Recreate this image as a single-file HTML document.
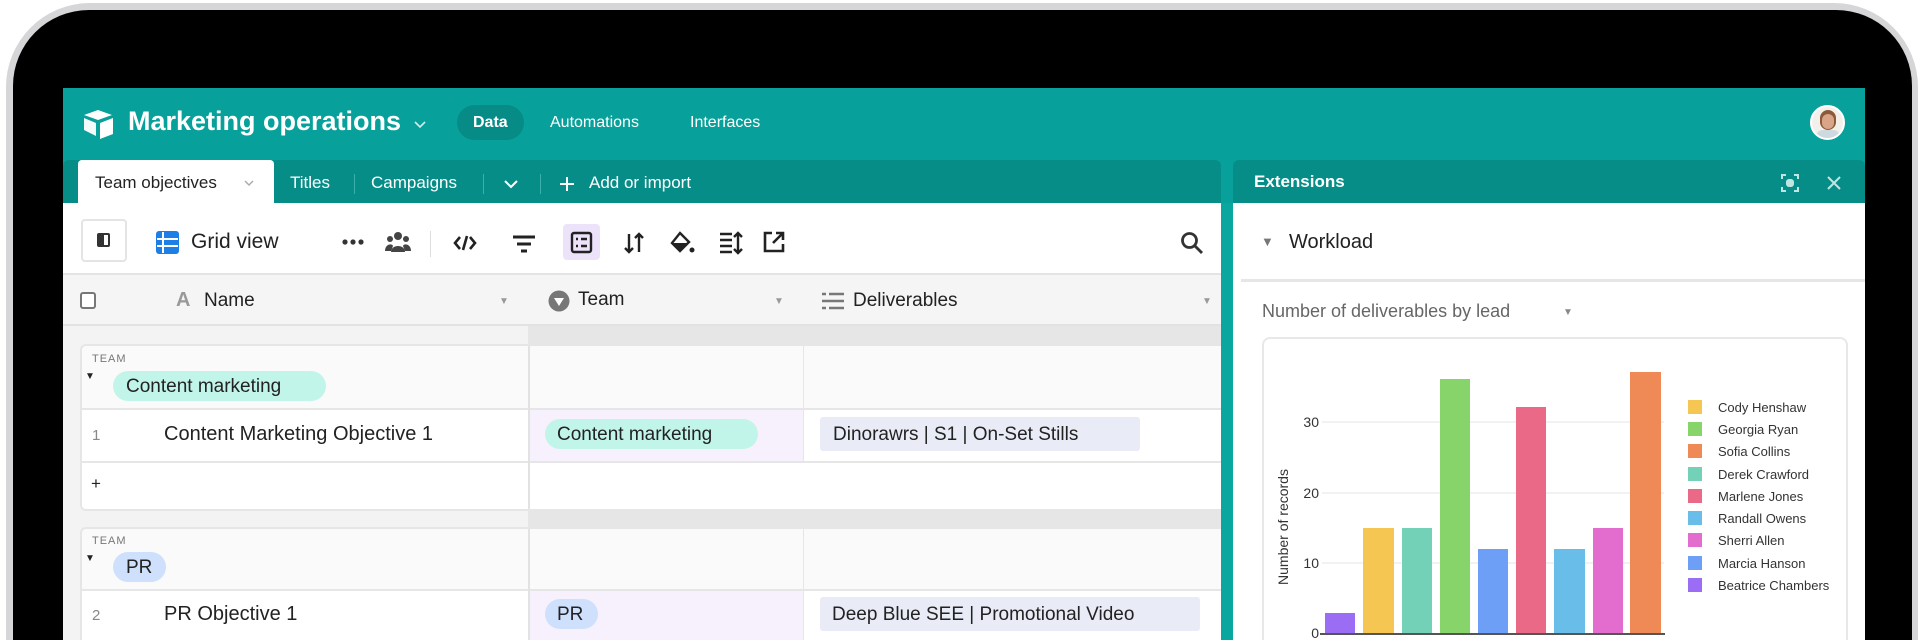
<!DOCTYPE html>
<html><head><meta charset="utf-8"><style>
*{margin:0;padding:0;box-sizing:border-box}
html,body{width:1920px;height:640px;overflow:hidden}
body{background:#fff;font-family:"Liberation Sans",sans-serif;position:relative}
.a{position:absolute}
.t{position:absolute;white-space:nowrap}
</style></head><body>
<div class="a" style="left:6px;top:3px;width:1912px;height:637px;border-radius:84px 84px 0 0;background:#d6d6d8"></div>
<div class="a" style="left:13px;top:10px;width:1899px;height:630px;border-radius:76px 76px 0 0;background:#000"></div>
<div class="a" style="left:63px;top:88px;width:1802px;height:552px;background:#07a09a;overflow:hidden">
  <svg class="a" style="left:20px;top:21px" width="32" height="30" viewBox="0 0 32 30"><path d="M15 1L29 6L15 11L1 6Z" fill="#fff"/><path d="M17 14L30 9V25L17 30Z" fill="#fff"/><path d="M1 9L13 14V27L1 21Z" fill="#fff" opacity=".95"/></svg>
  <div class="t" style="left:65px;top:18px;font-size:27px;color:#fff;font-weight:600">Marketing operations</div>
  <svg class="a" style="left:350px;top:32px" width="14" height="9"><path d="M2 2L7 7L12 2" stroke="#cfeeec" stroke-width="1.6" fill="none"/></svg>
  <div class="a" style="left:394px;top:17px;width:67px;height:35px;border-radius:18px;background:#068b86"></div>
  <div class="t" style="left:410px;top:26px;font-size:16px;color:#fff;font-weight:600">Data</div>
  <div class="t" style="left:487px;top:26px;font-size:16px;color:#fff">Automations</div>
  <div class="t" style="left:627px;top:26px;font-size:16px;color:#fff">Interfaces</div>
  <div class="a" style="left:1747px;top:17px;width:35px;height:35px;border-radius:50%;background:#f3f0ec;border:2px solid #fff;overflow:hidden">
    <div class="a" style="left:8px;top:3px;width:16px;height:20px;border-radius:8px;background:#8a5a3a"></div>
    <div class="a" style="left:10px;top:7px;width:12px;height:15px;border-radius:6px;background:#d9a487"></div>
    <div class="a" style="left:4px;top:23px;width:24px;height:14px;border-radius:8px;background:#cfd9e0"></div>
  </div>
  <div class="a" style="left:0;top:72px;width:1158px;height:44px;background:#078d88;border-radius:6px 6px 0 0"></div>
  <div class="a" style="left:15px;top:72px;width:196px;height:46px;background:#fff;border-radius:4px 4px 0 0"></div>
  <div class="t" style="left:32px;top:85px;font-size:17px;color:#222">Team objectives</div>
  <svg class="a" style="left:180px;top:91px" width="12" height="8"><path d="M2 2L6 6L10 2" stroke="#aaa" stroke-width="1.4" fill="none"/></svg>
  <div class="t" style="left:227px;top:85px;font-size:17px;color:#fff">Titles</div>
  <div class="a" style="left:291px;top:86px;width:1px;height:20px;background:#3bb0ab"></div>
  <div class="t" style="left:308px;top:85px;font-size:17px;color:#fff">Campaigns</div>
  <div class="a" style="left:420px;top:86px;width:1px;height:20px;background:#3bb0ab"></div>
  <svg class="a" style="left:440px;top:91px" width="16" height="10"><path d="M2 2L8 8L14 2" stroke="#fff" stroke-width="2" fill="none"/></svg>
  <div class="a" style="left:477px;top:86px;width:1px;height:20px;background:#3bb0ab"></div>
  <svg class="a" style="left:496px;top:88px" width="16" height="16"><path d="M8 1V15M1 8H15" stroke="#fff" stroke-width="2"/></svg>
  <div class="t" style="left:526px;top:85px;font-size:17px;color:#fff">Add or import</div>
  <div class="a" style="left:1170px;top:72px;width:632px;height:44px;background:#078d88;border-radius:6px 6px 0 0"></div>
  <div class="t" style="left:1191px;top:84px;font-size:17px;color:#fff;font-weight:600">Extensions</div>
  <svg class="a" style="left:1718px;top:85px" width="18" height="20" viewBox="0 0 18 20" fill="none" stroke="#bfe6e3" stroke-width="2"><path d="M1 6V2H5M13 2H17V6M17 14V18H13M5 18H1V14"/><rect x="6" y="7" width="6" height="6" rx="2" fill="#bfe6e3"/></svg>
  <svg class="a" style="left:1763px;top:87px" width="16" height="16"><path d="M2 2L14 14M14 2L2 14" stroke="#bfe6e3" stroke-width="2"/></svg>
  <div class="a" style="left:0;top:115px;width:1158px;height:440px;background:#fff">
    <div class="a" style="left:18px;top:16px;width:46px;height:43px;border:2px solid #e4e4e4;border-radius:4px"></div>
    <div class="a" style="left:34px;top:30px;width:13px;height:14px;border:2px solid #333;border-radius:2px"><div style="width:5px;height:10px;background:#333"></div></div>
    <svg class="a" style="left:92px;top:27px" width="25" height="25" viewBox="0 0 25 25"><rect x="1" y="1" width="23" height="23" rx="3" fill="#1d7ee6"/><path d="M8 2V23M2 9H23M2 16H23" stroke="#fff" stroke-width="2"/></svg>
    <div class="t" style="left:128px;top:27px;font-size:21px;color:#222">Grid view</div>
    <svg class="a" style="left:279px;top:36px" width="22" height="6" fill="#333"><circle cx="3" cy="3" r="2.6"/><circle cx="11" cy="3" r="2.6"/><circle cx="19" cy="3" r="2.6"/></svg>
    <svg class="a" style="left:322px;top:28px" width="26" height="22" viewBox="0 0 26 22" fill="#444"><circle cx="13" cy="5" r="4"/><circle cx="5" cy="8" r="3"/><circle cx="21" cy="8" r="3"/><path d="M6 21C6 13 20 13 20 21Z"/><path d="M0 20C0 13 7 12 8 15L6 20Z"/><path d="M26 20C26 13 19 12 18 15L20 20Z"/></svg>
    <div class="a" style="left:367px;top:28px;width:1px;height:26px;background:#ddd"></div>
    <svg class="a" style="left:390px;top:30px" width="24" height="20" fill="none" stroke="#222" stroke-width="2.6"><path d="M7 4L2 10L7 16M17 4L22 10L17 16M14 3L10 17"/></svg>
    <svg class="a" style="left:449px;top:31px" width="24" height="20" stroke="#222" stroke-width="3"><path d="M1 3H23M5 10H19M9 17H15"/></svg>
    <div class="a" style="left:500px;top:21px;width:37px;height:36px;border-radius:4px;background:#ece3fb"></div>
    <svg class="a" style="left:507px;top:28px" width="23" height="23" fill="none" stroke="#222" stroke-width="2.4"><rect x="2" y="2" width="19" height="19" rx="2"/><path d="M6 8H8M11 8H17M6 15H8M11 15H17"/></svg>
    <svg class="a" style="left:560px;top:29px" width="22" height="22" fill="none" stroke="#222" stroke-width="2.4"><path d="M6 2V20M2 16L6 20L10 16M16 20V2M12 6L16 2L20 6"/></svg>
    <svg class="a" style="left:607px;top:28px" width="26" height="24" viewBox="0 0 26 24"><path d="M10 2L19 11L10 20L2 12Z" fill="none" stroke="#222" stroke-width="2.4"/><path d="M3 12H18L10 20Z" fill="#222"/><circle cx="22" cy="19" r="2.5" fill="#222"/></svg>
    <svg class="a" style="left:656px;top:28px" width="24" height="24" fill="none" stroke="#222" stroke-width="2.4"><path d="M1 3H13M1 9H13M1 15H13M1 21H13M19 2V22M15 6L19 2L23 6M15 18L19 22L23 18"/></svg>
    <svg class="a" style="left:700px;top:28px" width="22" height="22" fill="none" stroke="#222" stroke-width="2.6"><path d="M9 2H2V20H20V13M13 2H20V9M20 2L10 12"/></svg>
    <svg class="a" style="left:1117px;top:28px" width="24" height="24" fill="none" stroke="#333" stroke-width="2.8"><circle cx="9.5" cy="9.5" r="7"/><path d="M15 15L22 22"/></svg>
    <div class="a" style="left:0;top:70px;width:1158px;height:53px;background:#f5f5f5;border-top:2px solid #e4e4e4;border-bottom:2px solid #e2e2e2"></div>
    <div class="a" style="left:17px;top:89px;width:16px;height:17px;border:2px solid #777;border-radius:3px;background:#fff"></div>
    <div class="t" style="left:113px;top:86px;font-size:20px;color:#999;font-weight:700">A</div>
    <div class="t" style="left:141px;top:87px;font-size:19px;color:#222">Name</div>
    <div class="t" style="left:436px;top:93px;font-size:10px;color:#999">▼</div>
    <svg class="a" style="left:485px;top:87px" width="22" height="22"><circle cx="11" cy="11" r="10.5" fill="#777"/><path d="M6 8H16L11 16Z" fill="#fff"/></svg>
    <div class="t" style="left:515px;top:86px;font-size:19px;color:#222">Team</div>
    <div class="t" style="left:711px;top:93px;font-size:10px;color:#999">▼</div>
    <svg class="a" style="left:758px;top:88px" width="24" height="20" stroke="#777" stroke-width="2.4"><path d="M8 3H23M1 10H23M8 17H23M1 3H5M1 17H5"/></svg>
    <div class="t" style="left:790px;top:87px;font-size:19px;color:#222">Deliverables</div>
    <div class="t" style="left:1139px;top:93px;font-size:10px;color:#999">▼</div>
    <div class="a" style="left:0;top:123px;width:1158px;height:317px;background:#f3f3f3"></div>
    <div class="a" style="left:465px;top:123px;width:693px;height:19px;background:#e6e6e6"></div>
    <div class="a" style="left:465px;top:307px;width:693px;height:18px;background:#e6e6e6"></div>
    <div class="a" style="left:17px;top:141px;width:1141px;height:167px;background:#fafafa;border:2px solid #e6e6e6;border-right:none;border-radius:6px 0 0 6px;overflow:hidden">
      <div class="a" style="left:0;top:62px;width:1141px;height:103px;background:#fff;border-top:2px solid #e6e6e6"></div>
      <div class="a" style="left:0;top:115px;width:1141px;height:2px;background:#e6e6e6"></div>
      <div class="a" style="left:446px;top:64px;width:275px;height:51px;background:#f6f1fd"></div>
      <div class="a" style="left:446px;top:0;width:2px;height:117px;background:#e2e2e2"></div>
      <div class="a" style="left:446px;top:117px;width:2px;height:50px;background:#e2e2e2"></div>
      <div class="a" style="left:721px;top:0;width:1px;height:117px;background:#e6e6e6"></div>
    </div>
    <div class="t" style="left:29px;top:150px;font-size:11px;color:#777;letter-spacing:1px">TEAM</div>
    <div class="t" style="left:22px;top:168px;font-size:10px;color:#222">▼</div>
    <div class="a" style="left:50px;top:168px;width:213px;height:30px;border-radius:15px;background:#c2f5e9"></div>
    <div class="t" style="left:63px;top:173px;font-size:19px;color:#222">Content marketing</div>
    <div class="t" style="left:29px;top:224px;font-size:15px;color:#888">1</div>
    <div class="t" style="left:101px;top:220px;font-size:20px;color:#222">Content Marketing Objective 1</div>
    <div class="a" style="left:482px;top:216px;width:213px;height:30px;border-radius:15px;background:#c2f5e9"></div>
    <div class="t" style="left:494px;top:221px;font-size:19px;color:#222">Content marketing</div>
    <div class="a" style="left:757px;top:214px;width:320px;height:34px;border-radius:3px;background:#e9ecf7"></div>
    <div class="t" style="left:770px;top:221px;font-size:19px;color:#222">Dinorawrs | S1 | On-Set Stills</div>
    <div class="t" style="left:28px;top:271px;font-size:17px;color:#222">+</div>
    <div class="a" style="left:17px;top:324px;width:1141px;height:130px;background:#fafafa;border:2px solid #e6e6e6;border-right:none;border-radius:6px 0 0 0;overflow:hidden">
      <div class="a" style="left:0;top:60px;width:1141px;height:80px;background:#fff;border-top:2px solid #e6e6e6"></div>
      <div class="a" style="left:446px;top:62px;width:275px;height:80px;background:#f6f1fd"></div>
      <div class="a" style="left:446px;top:0;width:2px;height:140px;background:#e2e2e2"></div>
      <div class="a" style="left:721px;top:0;width:1px;height:140px;background:#e6e6e6"></div>
    </div>
    <div class="t" style="left:29px;top:332px;font-size:11px;color:#777;letter-spacing:1px">TEAM</div>
    <div class="t" style="left:22px;top:350px;font-size:10px;color:#222">▼</div>
    <div class="a" style="left:50px;top:349px;width:53px;height:30px;border-radius:15px;background:#cfe0fd"></div>
    <div class="t" style="left:63px;top:354px;font-size:19px;color:#222">PR</div>
    <div class="t" style="left:29px;top:404px;font-size:15px;color:#888">2</div>
    <div class="t" style="left:101px;top:400px;font-size:20px;color:#222">PR Objective 1</div>
    <div class="a" style="left:482px;top:396px;width:53px;height:30px;border-radius:15px;background:#cfe0fd"></div>
    <div class="t" style="left:494px;top:401px;font-size:19px;color:#222">PR</div>
    <div class="a" style="left:757px;top:394px;width:380px;height:34px;border-radius:3px;background:#e9ecf7"></div>
    <div class="t" style="left:769px;top:401px;font-size:19px;color:#222">Deep Blue SEE | Promotional Video</div>
  </div>
  <div class="a" style="left:1158px;top:115px;width:12px;height:440px;background:#0aa7a1"></div>
  <div class="a" style="left:1170px;top:115px;width:632px;height:440px;background:#fff">
    <div class="t" style="left:28px;top:31px;font-size:13px;color:#777">▼</div>
    <div class="t" style="left:56px;top:28px;font-size:20px;color:#222">Workload</div>
    <div class="a" style="left:8px;top:76px;width:624px;height:3px;background:#e4e6e8"></div>
    <div class="t" style="left:29px;top:98px;font-size:18px;color:#666">Number of deliverables by lead</div>
    <div class="t" style="left:330px;top:104px;font-size:10px;color:#888">▼</div>
    <div class="a" style="left:29px;top:134px;width:586px;height:320px;border:2px solid #e8e8e8;border-radius:8px;background:#fff"></div>
  </div>
  <svg class="a" style="left:0;top:0" width="1802" height="552" viewBox="63 88 1802 552" font-family="Liberation Sans, sans-serif">
    <g stroke="#eee" stroke-width="1.5"><line x1="1322" y1="422" x2="1664" y2="422"/><line x1="1322" y1="493" x2="1664" y2="493"/><line x1="1322" y1="563" x2="1664" y2="563"/></g>
    <g font-size="14" fill="#333" text-anchor="end"><text x="1319" y="427">30</text><text x="1319" y="498">20</text><text x="1319" y="568">10</text><text x="1319" y="638">0</text></g>
    <text transform="translate(1288,527) rotate(-90)" font-size="14" fill="#333" text-anchor="middle">Number of records</text>
    <rect x="1325" y="613" width="30" height="21" fill="#9b6cf4"/>
    <rect x="1363" y="528" width="31" height="106" fill="#f5c752"/>
    <rect x="1402" y="528" width="30" height="106" fill="#72d1b6"/>
    <rect x="1440" y="379" width="30" height="255" fill="#86d46a"/>
    <rect x="1478" y="549" width="30" height="85" fill="#6c9ff5"/>
    <rect x="1516" y="407" width="30" height="227" fill="#ea6986"/>
    <rect x="1554" y="549" width="31" height="85" fill="#69bde9"/>
    <rect x="1593" y="528" width="30" height="106" fill="#e36dce"/>
    <rect x="1630" y="372" width="31" height="262" fill="#ef8955"/>
    <line x1="1320" y1="634" x2="1665" y2="634" stroke="#555" stroke-width="2"/>
    <g font-size="13" fill="#333">
      <rect x="1688" y="400" width="14" height="14" fill="#f5c752"/><text x="1718" y="412">Cody Henshaw</text>
      <rect x="1688" y="422" width="14" height="14" fill="#86d46a"/><text x="1718" y="434">Georgia Ryan</text>
      <rect x="1688" y="444" width="14" height="14" fill="#ef8955"/><text x="1718" y="456">Sofia Collins</text>
      <rect x="1688" y="467" width="14" height="14" fill="#72d1b6"/><text x="1718" y="479">Derek Crawford</text>
      <rect x="1688" y="489" width="14" height="14" fill="#ea6986"/><text x="1718" y="501">Marlene Jones</text>
      <rect x="1688" y="511" width="14" height="14" fill="#69bde9"/><text x="1718" y="523">Randall Owens</text>
      <rect x="1688" y="533" width="14" height="14" fill="#e36dce"/><text x="1718" y="545">Sherri Allen</text>
      <rect x="1688" y="556" width="14" height="14" fill="#6c9ff5"/><text x="1718" y="568">Marcia Hanson</text>
      <rect x="1688" y="578" width="14" height="14" fill="#9b6cf4"/><text x="1718" y="590">Beatrice Chambers</text>
    </g>
  </svg>
</div>
</body></html>
